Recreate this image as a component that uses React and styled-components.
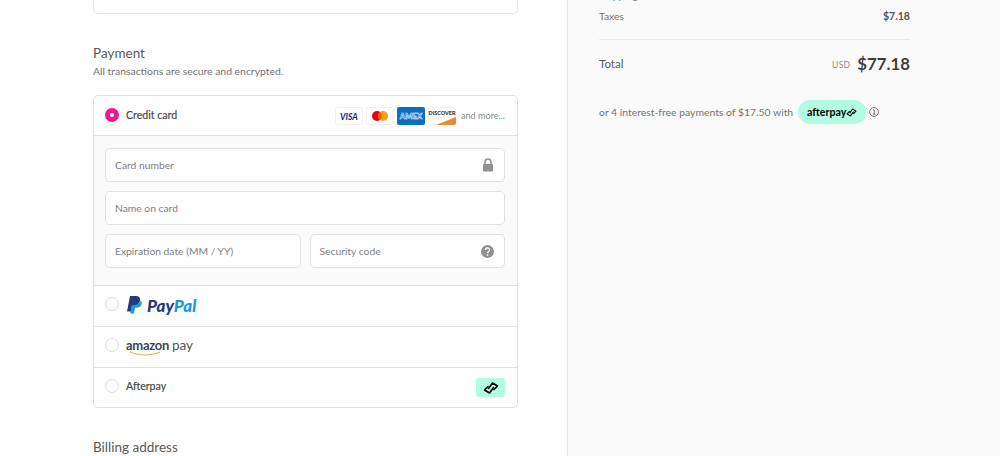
import styled, {createGlobalStyle} from 'styled-components'

const GlobalStyle = createGlobalStyle`
  html, body {
    margin: 0;
    padding: 0;
    background: #fff;
    font-family: Lato, "Open Sans", sans-serif;
    color: #545454;
  }
`

const Page = styled.div`
  display: flex;
  width: 1000px;
  height: 456px;
  overflow: hidden;
`
const Main = styled.div`
  width: 567px;
  box-sizing: border-box;
  padding-left: 93px;
  flex-shrink: 0;
`
const Column = styled.div`
  width: 425px;
`
const CardStub = styled.div`
  height: 14px;
  box-sizing: border-box;
  border: 1px solid #e6e6e6;
  border-top: none;
  border-radius: 0 0 5px 5px;
`
const SectionTitle = styled.h2`
  margin: ${p => p.$top}px 0 0;
  font-size: 13.5px;
  line-height: 18px;
  font-weight: 400;
  color: #5a5a5a;
`
const SectionNote = styled.p`
  margin: 2px 0 16px;
  font-size: 10.4px;
  line-height: 15px;
  color: #737373;
`
const PaymentBox = styled.div`
  border: 1px solid #e0e0e0;
  border-radius: 5px;
  overflow: hidden;
`
const MethodRow = styled.div`
  display: flex;
  align-items: center;
  height: ${p => p.$h}px;
  box-sizing: border-box;
  padding: 0 12px ${p => p.$pb || 2}px 11px;
  border-top: ${p => (p.$first ? 'none' : '1px solid #e0e0e0')};
`
const Radio = styled.span`
  width: 14px;
  height: 14px;
  box-sizing: border-box;
  border-radius: 50%;
  flex-shrink: 0;
  margin: 0 7px ${p => (p.$lift ? 2 : 0)}px 0;
  background: #fff;
  border: ${p => (p.$on ? '5px solid #ec1a8e' : '1px solid #dcdcdc')};
`
const MethodName = styled.span`
  font-size: 10.6px;
  color: #4a4a4a;
  -webkit-text-stroke: 0.2px #4a4a4a;
`
const CardList = styled.div`
  display: flex;
  align-items: center;
  gap: 3px;
  margin: 2px 0 0 auto;
`
const MoreText = styled.span`
  font-size: 9.1px;
  color: #8a8a8a;
  margin-left: 2px;
`
const CardForm = styled.div`
  display: flex;
  flex-direction: column;
  gap: 9px;
  height: 150px;
  box-sizing: border-box;
  padding: 12px 12px 0 11px;
  background: #fafafa;
  border-top: 1px solid #e0e0e0;
`
const FieldRow = styled.div`
  display: flex;
  gap: 9px;
`
const Field = styled.div`
  flex: ${p => (p.$half ? 1 : 'none')};
  display: flex;
  align-items: center;
  justify-content: space-between;
  height: 34px;
  box-sizing: border-box;
  padding: 0 10px 0 9px;
  background: #fff;
  border: 1px solid #e0e0e0;
  border-radius: 5px;
  font-size: 10.3px;
  color: #808080;
`
const PayPalWord = styled.span`
  margin-left: 5px;
  font-size: 17px;
  font-weight: 900;
  font-style: italic;
  color: #253b80;
`
const PayPalPal = styled.span`
  color: #179bd7;
`
const AmazonLogo = styled.span`
  position: relative;
  display: inline-flex;
  align-items: baseline;
  gap: 3px;
  line-height: 16px;
`
const AmazonWord = styled.span`
  font-size: 13px;
  font-weight: 700;
  letter-spacing: -0.3px;
  color: #3c4650;
`
const AmazonPay = styled.span`
  font-size: 13.5px;
  color: #4a5560;
`
const AmazonSmile = styled.svg`
  position: absolute;
  left: 3px;
  top: 14px;
`
const AfterpayBadge = styled.span`
  display: flex;
  align-items: center;
  justify-content: center;
  margin: 0 0 -4px auto;
  width: 29px;
  height: 19px;
  border-radius: 3px;
  background: #b2fce4;
`
const Aside = styled.div`
  flex: 1;
  box-sizing: border-box;
  padding-left: 31px;
  background: #fafafa;
  border-left: 1px solid #e6e6e6;
`
const Summary = styled.div`
  width: 311px;
`
const ClippedRow = styled.div`
  display: flex;
  align-items: flex-end;
  height: 3px;
  overflow: hidden;
  font-size: 10.3px;
  line-height: 15px;
  color: #737373;
`
const SummaryRow = styled.div`
  display: flex;
  justify-content: space-between;
  align-items: center;
  margin-top: 5px;
  padding-bottom: 15px;
  font-size: 10.3px;
  line-height: 16px;
  color: #737373;
  border-bottom: 1px solid #ebebeb;
`
const SummaryValue = styled.span`
  font-size: 10.6px;
  font-weight: 700;
  color: #545454;
`
const TotalRow = styled.div`
  display: flex;
  justify-content: space-between;
  align-items: center;
  height: 46px;
  font-size: 11.5px;
  color: #5a5a5a;
`
const TotalAmount = styled.span`
  display: flex;
  align-items: center;
  gap: 7px;
`
const Currency = styled.span`
  margin-top: 3px;
  font-size: 8.5px;
  color: #8a8a8a;
  letter-spacing: 0.3px;
`
const Price = styled.span`
  font-size: 16.8px;
  font-weight: 700;
  color: #3f3f3f;
`
const Installments = styled.div`
  display: flex;
  align-items: center;
  margin-top: 14px;
  font-size: 10.4px;
  color: #737373;
`
const AfterpayPill = styled.span`
  display: flex;
  align-items: center;
  justify-content: center;
  width: 68px;
  height: 24px;
  margin: 0 3px 0 5px;
  border-radius: 12px;
  background: #b2fce4;
  font-size: 10.5px;
  font-weight: 900;
  color: #111;
`

const LinkMark = ({size = 16}) => (
  <svg width={size} height={size} viewBox="0 0 16 16" fill="none" stroke="#000" strokeWidth="1.6" strokeLinejoin="round" strokeLinecap="round">
    <path d="M5.500 8.500 L9.500 3 L14.500 6 L11 9.500" />
    <path d="M10.500 7.500 L6.500 13 L1.500 10 L5 6.500" />
  </svg>
)

const Visa = () => (
  <svg width="28" height="18" viewBox="0 0 28 18">
    <rect x=".5" y=".5" width="27" height="17" rx="2" fill="#fff" stroke="#f0f0f0" />
    <text x="14" y="12.500" textAnchor="middle" fontFamily="Lato" fontWeight="900" fontStyle="italic" fontSize="8.500" fill="#26337a">VISA</text>
  </svg>
)
const Master = () => (
  <svg width="28" height="18" viewBox="0 0 28 18">
    <rect x=".5" y=".5" width="27" height="17" rx="2" fill="#fff" stroke="#f0f0f0" />
    <circle cx="11" cy="9" r="5" fill="#eb001b" />
    <circle cx="17" cy="9" r="5" fill="#f79e1b" />
    <path d="M14 5a5 5 0 0 1 0 8a5 5 0 0 1 0-8z" fill="#ff5f00" />
  </svg>
)
const Amex = () => (
  <svg width="28" height="18" viewBox="0 0 28 18">
    <rect width="28" height="18" rx="2" fill="#0a6fc2" />
    <text x="14" y="12" textAnchor="middle" fontFamily="Lato" fontWeight="900" fontSize="7.800" fill="#0a6fc2" stroke="#fff" strokeWidth=".45">AMEX</text>
  </svg>
)
const Discover = () => (
  <svg width="28" height="18" viewBox="0 0 28 18">
    <rect x=".5" y=".5" width="27" height="17" rx="2" fill="#fff" stroke="#f0f0f0" />
    <path d="M8 18 L28 10 V16 a2 2 0 0 1 -2 2 z" fill="#e98a32" />
    <text x="14" y="8" textAnchor="middle" fontFamily="Lato" fontWeight="900" fontSize="5.400" fill="#333">DISCOVER</text>
  </svg>
)
const Lock = () => (
  <svg width="12" height="14" viewBox="0 0 12 14">
    <path d="M3 6V4a3 3 0 0 1 6 0v2" fill="none" stroke="#919191" strokeWidth="1.600" />
    <rect x="1" y="6" width="10" height="7.500" rx="1" fill="#919191" />
  </svg>
)
const Help = () => (
  <svg width="13" height="13" viewBox="0 0 13 13">
    <circle cx="6.500" cy="6.500" r="6.500" fill="#919191" />
    <path d="M4.500 5a2 2 0 1 1 3 1.700c-.7.400-1 .7-1 1.500" fill="none" stroke="#fff" strokeWidth="1.300" />
    <circle cx="6.500" cy="10" r=".85" fill="#fff" />
  </svg>
)
const PayPalMark = () => (
  <svg width="16" height="18" viewBox="0 0 16 18">
    <path d="M4 0h5.500c3.500 0 5 2 4.500 4.500C13.500 8 11 9.500 8 9.500H6L5 15.500H1z" fill="#253b80" />
    <path d="M14.500 4.500c1.500 1 1.500 2.500 1 4-.7 2.300-2.700 3.300-5 3.300H9L8 17.500H4.300L5 14l1-5h2.500c3 0 5.500-1.500 6-4.500z" fill="#179bd7" />
  </svg>
)
const InfoMark = () => (
  <svg width="10" height="10" viewBox="0 0 10 10" fill="none" stroke="#666" strokeWidth=".9">
    <circle cx="5" cy="5" r="4.400" />
    <path d="M4 3h1.200v4M3.800 7.200h2.600" />
  </svg>
)

export default function App() {
  return (
    <Page>
      <GlobalStyle />
      <Main>
        <Column>
          <CardStub />
          <SectionTitle $top={30}>Payment</SectionTitle>
          <SectionNote>All transactions are secure and encrypted.</SectionNote>
          <PaymentBox>
            <MethodRow $first $h={39}>
              <Radio $on />
              <MethodName>Credit card</MethodName>
              <CardList>
                <Visa />
                <Master />
                <Amex />
                <Discover />
                <MoreText>and more...</MoreText>
              </CardList>
            </MethodRow>
            <CardForm>
              <Field>Card number <Lock /></Field>
              <Field>Name on card</Field>
              <FieldRow>
                <Field $half>Expiration date (MM / YY)</Field>
                <Field $half>Security code <Help /></Field>
              </FieldRow>
            </CardForm>
            <MethodRow $h={41}>
              <Radio $lift />
              <PayPalMark />
              <PayPalWord>Pay<PayPalPal>Pal</PayPalPal></PayPalWord>
            </MethodRow>
            <MethodRow $h={41} $pb={4}>
              <Radio />
              <AmazonLogo>
                <AmazonWord>amazon</AmazonWord>
                <AmazonPay>pay</AmazonPay>
                <AmazonSmile width="34" height="6" viewBox="0 0 34 6" fill="none">
                  <path d="M1 1c9 4 20 4 30 0" stroke="#f0a33a" strokeWidth="1" />
                </AmazonSmile>
              </AmazonLogo>
            </MethodRow>
            <MethodRow $h={40} $pb={4}>
              <Radio />
              <MethodName>Afterpay</MethodName>
              <AfterpayBadge><LinkMark /></AfterpayBadge>
            </MethodRow>
          </PaymentBox>
          <SectionTitle $top={30}>Billing address</SectionTitle>
        </Column>
      </Main>
      <Aside>
        <Summary>
          <ClippedRow>Shipping</ClippedRow>
          <SummaryRow>
            Taxes
            <SummaryValue>$7.18</SummaryValue>
          </SummaryRow>
          <TotalRow>
            Total
            <TotalAmount>
              <Currency>USD</Currency>
              <Price>$77.18</Price>
            </TotalAmount>
          </TotalRow>
          <Installments>
            or 4 interest-free payments of $17.50 with
            <AfterpayPill>afterpay<LinkMark size={11} /></AfterpayPill>
            <InfoMark />
          </Installments>
        </Summary>
      </Aside>
    </Page>
  )
}
